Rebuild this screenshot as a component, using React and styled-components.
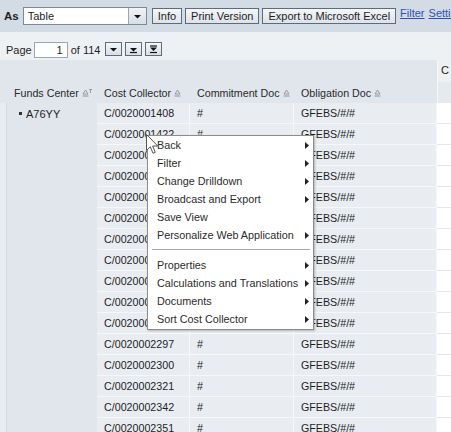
import React from 'react';
import styled, { createGlobalStyle } from 'styled-components';

const GlobalStyle = createGlobalStyle`
	html, body {
		margin: 0;
		padding: 0;
		background: #e2e7ed;
		font-family: "Liberation Sans", Arial, sans-serif;
	}
`;

const Page = styled.div`
	position: relative;
	width: 451px;
	height: 432px;
	overflow: hidden;
	background: #e2e7ed;
	color: #1e1e1e;
`;

const Toolbar = styled.div`
	height: 32px;
	display: flex;
	align-items: center;
	padding-left: 4px;
	background: #d3dbe4;
	font-size: 11px;
	white-space: nowrap;
	overflow: hidden;
	& > * {
		flex-shrink: 0;
	}
`;

const AsLabel = styled.span`
	font-weight: bold;
	font-size: 11.5px;
	margin-right: 4px;
`;

const Select = styled.div`
	width: 122px;
	height: 16px;
	display: flex;
	align-items: center;
	background: #fff;
	border: 1px solid #7b8a99;
	margin-right: 5px;
`;

const SelectText = styled.span`
	flex: 1;
	padding-left: 4px;
`;

const SelectArrow = styled.div`
	width: 17px;
	height: 16px;
	display: flex;
	align-items: center;
	justify-content: center;
	background: linear-gradient(#f1f3f6, #d9dee5);
	border-left: 1px solid #9aa6b2;
`;

const Button = styled.div`
	height: 14px;
	line-height: 14px;
	padding: 0 5px;
	margin-right: 3px;
	border: 1px solid #5e6b78;
	background: linear-gradient(#f4f6f8, #dde3ea);
`;

const Link = styled.a`
	color: #2a52b8;
	text-decoration: underline;
	margin-left: ${p => p.$gap}px;
	align-self: flex-start;
	margin-top: 7px;
`;

const Pager = styled.div`
	height: 18px;
	padding: 10px 0 0 6px;
	display: flex;
	align-items: flex-start;
	background: #eef1f4;
	font-size: 11px;
`;

const PagerText = styled.span`
	line-height: 16px;
	margin-right: ${p => p.$mr || 0}px;
`;

const PageInput = styled.div`
	width: 28px;
	height: 14px;
	line-height: 14px;
	text-align: right;
	padding-right: 4px;
	background: #fff;
	border: 1px solid #9aa6b2;
	margin: 0 3px 0 2px;
`;

const NavButton = styled.div`
	width: 15px;
	height: 12px;
	margin-right: 3px;
	display: flex;
	align-items: center;
	justify-content: center;
	border: 1px solid #5e6b78;
	background: linear-gradient(#f4f6f8, #d8dee6);
`;

const Grid = styled.div`
	display: grid;
	grid-template-columns: 7px 90px 93px 104px 143px 1fr;
	grid-template-rows: 22px 21px repeat(16, 21px);
	font-size: 10.7px;
`;

const Band = styled.div`
	grid-row: 1;
	grid-column: 1 / 6;
	background: #e1e6ec;
`;

const GroupHead = styled.div`
	grid-row: 1;
	grid-column: 6;
	background: #eef1f4;
	border-left: 1px solid #f6f7f9;
	padding: 4px 0 0 3px;
	font-size: 11px;
	color: #222;
`;

const HeadCell = styled.div`
	grid-row: 2;
	grid-column: ${p => p.$col};
	display: flex;
	align-items: center;
	gap: 3px;
	padding-left: 7px;
	background: ${p => (p.$right ? '#e6eaef' : '#e1e6ec')};
	border-left: ${p => (p.$right ? '1px solid #f6f7f9' : 'none')};
	color: #2a2a2a;
	white-space: nowrap;
`;

const Strip = styled.div`
	grid-row: 3 / span 16;
	grid-column: 1;
	background: #e8ecf0;
	border-right: 1px solid #d2d9e1;
`;

const Funds = styled.div`
	grid-row: 3 / span 16;
	grid-column: 2;
	background: #e1e6ec;
	padding-left: 12px;
`;

const FundsValue = styled.div`
	height: 21px;
	display: flex;
	align-items: center;
	gap: 4px;
	font-size: 11px;
	&::before {
		content: '';
		width: 3px;
		height: 3px;
		background: #333;
	}
`;

const DataCell = styled.div`
	display: flex;
	align-items: center;
	padding-left: 7px;
	background: #e9edf2;
	border-right: 1px solid #f5f7f9;
	border-bottom: 1px solid #f5f7f9;
	white-space: nowrap;
	overflow: hidden;
`;

const RightCell = styled.div`
	background: #fff;
	border-bottom: 1px solid #e2e7ed;
`;

const Menu = styled.div`
	position: absolute;
	left: 147px;
	top: 135px;
	width: 165px;
	padding-bottom: 1px;
	background: #fff;
	border: 1px solid #8c8c8c;
	box-shadow: 1px 1px 2px rgba(0, 0, 0, 0.25);
	font-size: 10.8px;
	color: #2b2b2b;
`;

const MenuItem = styled.div`
	height: 18px;
	display: flex;
	align-items: center;
	justify-content: space-between;
	padding: 0 4px 0 9px;
	white-space: nowrap;
`;

const Separator = styled.div`
	height: 1px;
	margin: 5px 3px 6px 4px;
	background: #a6a6a6;
`;

const Cursor = styled.svg`
	position: absolute;
	left: 146px;
	top: 134px;
`;

const SortIcon = ({ filter }) => (
	<svg width={filter ? 10 : 7} height="8" viewBox={filter ? '0 0 10 8' : '0 0 7 8'}>
		<path d="M1 5 L3.5 1 L6 5 Z" fill="none" stroke="#8b939c" strokeWidth="0.9" />
		<path d="M0.5 7 H6.5" stroke="#8b939c" strokeWidth="1" />
		{filter && <path d="M7 0.5 H10 M8.5 0.5 V4" stroke="#8b939c" strokeWidth="0.9" />}
	</svg>
);

const Arrow = () => (
	<svg width="4" height="7" viewBox="0 0 4 7">
		<path d="M0 0 L4 3.5 L0 7 Z" fill="#222" />
	</svg>
);

const Down = ({ top, bottom }) => (
	<svg width="9" height="9" viewBox="0 0 9 9">
		{top && <path d="M1 1 H8" stroke="#111" strokeWidth="1.2" />}
		<path d={top ? 'M1 2.5 H8 L4.5 6 Z' : 'M1 3 H8 L4.5 6.5 Z'} fill="#111" />
		{bottom && <path d="M1 7.5 H8" stroke="#111" strokeWidth="1.2" />}
	</svg>
);

const rows = [
	'1408', '1422', '1443', '1465', '1507', '1589', '1634', '1702',
	'1815', '1968', '2124', '2297', '2300', '2321', '2342', '2351',
];

const menu = [
	['Back', true],
	['Filter', true],
	['Change Drilldown', true],
	['Broadcast and Export', true],
	['Save View', false],
	['Personalize Web Application', true],
	null,
	['Properties', true],
	['Calculations and Translations', true],
	['Documents', true],
	['Sort Cost Collector', true],
];

const App = () => {
	return (
		<>
			<GlobalStyle />
			<Page>
				<Toolbar>
					<AsLabel>As</AsLabel>
					<Select>
						<SelectText>Table</SelectText>
						<SelectArrow>
							<Down />
						</SelectArrow>
					</Select>
					<Button>Info</Button>
					<Button>Print Version</Button>
					<Button>Export to Microsoft Excel</Button>
					<Link $gap={1}>Filter</Link>
					<Link $gap={4}>Settings</Link>
				</Toolbar>

				<Pager>
					<PagerText>Page</PagerText>
					<PageInput>1</PageInput>
					<PagerText $mr={5}>of 114</PagerText>
					<NavButton>
						<Down />
					</NavButton>
					<NavButton>
						<Down bottom />
					</NavButton>
					<NavButton>
						<Down top bottom />
					</NavButton>
				</Pager>

				<Grid>
					<Band />
					<GroupHead>C</GroupHead>
					<HeadCell $col={1} />
					<HeadCell $col={2}>
						Funds Center
						<SortIcon filter />
					</HeadCell>
					<HeadCell $col={3}>
						Cost Collector <SortIcon />
					</HeadCell>
					<HeadCell $col={4}>
						Commitment Doc <SortIcon />
					</HeadCell>
					<HeadCell $col={5}>
						Obligation Doc <SortIcon />
					</HeadCell>
					<HeadCell $col={6} $right />

					<Strip />
					<Funds>
						<FundsValue>A76YY</FundsValue>
					</Funds>

					{rows.map(r => (
						<React.Fragment key={r}>
							<DataCell>C/002000{r}</DataCell>
							<DataCell>#</DataCell>
							<DataCell>GFEBS/#/#</DataCell>
							<RightCell />
						</React.Fragment>
					))}
				</Grid>

				<Menu>
					{menu.map((m, i) =>
						m ? (
							<MenuItem key={m[0]}>
								{m[0]}
								{m[1] && <Arrow />}
							</MenuItem>
						) : (
							<Separator key={'sep' + i} />
						)
					)}
				</Menu>

				<Cursor width="13" height="21" viewBox="0 0 13 21">
					<path
						d="M0.5 0.5 L0.5 16.5 L4.3 12.8 L7 19.3 L9.3 18.3 L6.6 12 L11.8 12 Z"
						fill="#fff"
						stroke="#555"
						strokeWidth="1"
					/>
				</Cursor>
			</Page>
		</>
	);
};

export default App;
